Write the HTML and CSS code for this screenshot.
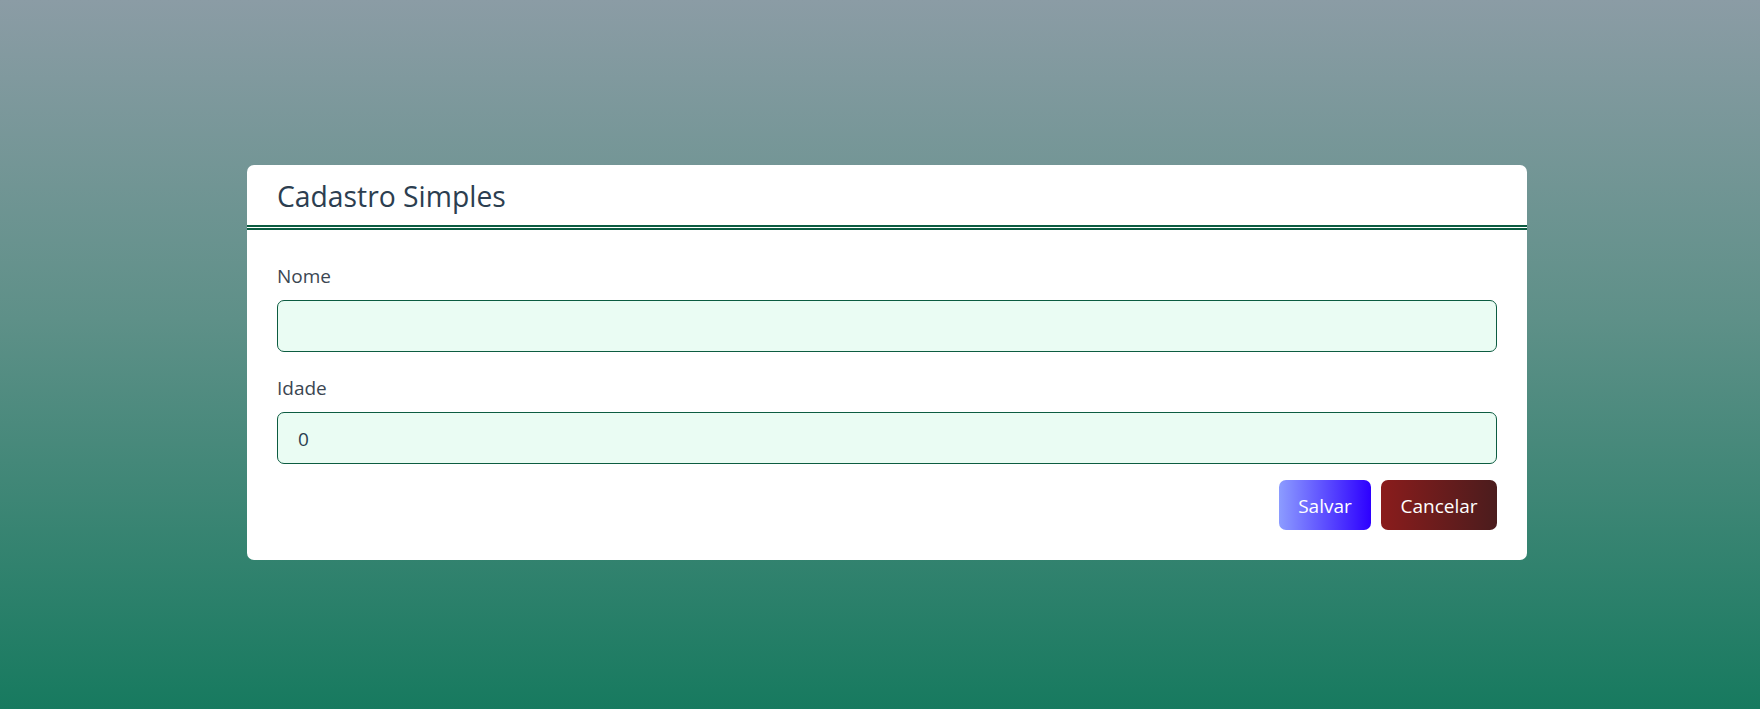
FILE: index.html
```html
<!DOCTYPE html>
<html lang="pt-BR">
<head>
<meta charset="utf-8">
<title>Cadastro Simples</title>
<link rel="stylesheet" href="styles.css">
</head>
<body>
<main class="page">
  <section class="card">
    <header class="card-header">
      <h1 class="card-title">Cadastro Simples</h1>
    </header>
    <form class="card-body">
      <div class="form-group">
        <label class="form-label" for="nome">Nome</label>
        <input class="form-control" id="nome" type="text" value="">
      </div>
      <div class="form-group last">
        <label class="form-label" for="idade">Idade</label>
        <input class="form-control" id="idade" type="text" value="0">
      </div>
      <div class="actions">
        <button type="button" class="btn btn-save">Salvar</button>
        <button type="button" class="btn btn-cancel">Cancelar</button>
      </div>
    </form>
  </section>
</main>
</body>
</html>
```

FILE: styles.css
```css
* { box-sizing: border-box; }

html, body {
  margin: 0;
  height: 100%;
}

body {
  font-family: "Open Sans", "Noto Sans", Arial, sans-serif;
  background: linear-gradient(180deg, #8b9ca5 0%, #5e9088 45%, #177a5f 100%);
  color: #2c3e50;
}

.page {
  display: flex;
  justify-content: center;
  padding: 165px 0 0 14px;
}

.card {
  width: 1280px;
  background: #ffffff;
  border-radius: 7px;
  overflow: hidden;
}

.card-header {
  height: 65px;
  padding: 2px 30px 0;
  display: flex;
  align-items: center;
  border-bottom: 5px double #0c5c41;
}

.card-title {
  margin: 0;
  font-weight: 400;
  font-size: 28.3px;
  line-height: 34px;
  color: #2c3e50;
}

.card-body {
  padding: 33px 30px 30px;
}

.form-group {
  margin-bottom: 23px;
}

.form-group.last {
  margin-bottom: 16px;
}

.form-label {
  display: block;
  font-size: 19px;
  line-height: 27px;
  margin-bottom: 10px;
  color: #3b4652;
}

.form-control {
  display: block;
  width: 100%;
  height: 52px;
  padding: 1px 20px 0;
  font-family: inherit;
  font-size: 19px;
  color: #2c3e50;
  background: #eafcf3;
  border: 1px solid #0c5c41;
  border-radius: 7px;
  outline: none;
}

.actions {
  display: flex;
  justify-content: flex-end;
  gap: 10px;
}

.btn {
  height: 50px;
  padding: 2px 19px 0;
  font-family: inherit;
  font-size: 19px;
  color: #ffffff;
  border: none;
  border-radius: 7px;
  cursor: pointer;
}

.btn-save {
  min-width: 92px;
  background: linear-gradient(90deg, #8c9cff 0%, #2d00ff 100%);
}

.btn-cancel {
  min-width: 116px;
  background: linear-gradient(90deg, #8a1c1c 0%, #4b1c1d 100%);
}
```
